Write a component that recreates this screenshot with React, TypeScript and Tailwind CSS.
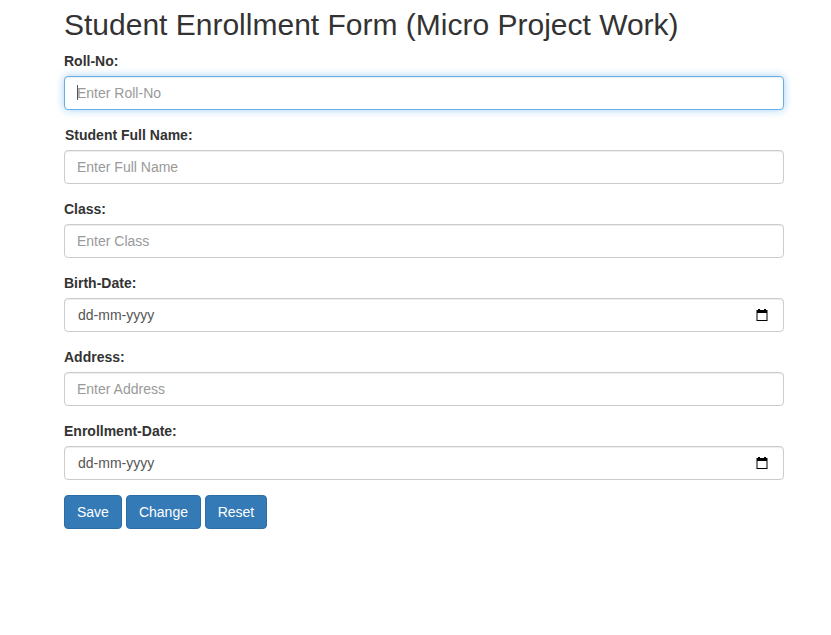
function Cal() {
  return (
    <svg width="14" height="14" viewBox="0 0 14 14" className="shrink-0">
      <path d="M3 1h2v1h4V1h2v1h1.5v11h-11V2H3z M2.5 5v7h9V5z" fill="#000" fillRule="evenodd" />
    </svg>
  );
}

function Field({ label, placeholder, focus, date, labelClass }: { label: string; placeholder: string; focus?: boolean; date?: boolean; labelClass?: string }) {
  const ring = focus
    ? "border-[#66afe9] shadow-[inset_0_1px_1px_rgba(0,0,0,.075),0_0_8px_rgba(102,175,233,.6)]"
    : "border-[#ccc] shadow-[inset_0_1px_1px_rgba(0,0,0,.075)]";
  return (
    <div className="mb-[15px]">
      <label className={`block mb-[5px] h-5 text-sm leading-5 font-bold text-[#333] ${labelClass ?? ""}`}>{label}</label>
      {date ? (
        <div className={`flex h-[34px] items-center justify-between rounded border bg-white pl-[13px] pr-[14px] text-sm text-[#555] ${ring}`}>
          <span>dd-mm-yyyy</span>
          <Cal />
        </div>
      ) : (
        <div className="relative">
          <input
            placeholder={placeholder}
            className={`block h-[34px] w-full rounded border bg-white px-3 text-sm text-[#555] outline-none placeholder:text-[#999] ${ring}`}
          />
          {focus && <span className="absolute left-[13px] top-[9px] h-[15px] w-px bg-[#555]" />}
        </div>
      )}
    </div>
  );
}

export default function App() {
  return (
    <div className="min-h-screen bg-white font-['Liberation_Sans',Arial,sans-serif] text-[#333]">
      <div className="w-[720px] ml-[64px]">
        <h2 className="text-[30px] leading-[33px] font-normal text-[#333] pt-[8px] mb-[10px]">Student Enrollment Form (Micro Project Work)</h2>
        <form>
          <Field label="Roll-No:" placeholder="Enter Roll-No" focus />
          <Field label="Student Full Name:" placeholder="Enter Full Name" labelClass="pl-px" />
          <Field label="Class:" placeholder="Enter Class" />
          <Field label="Birth-Date:" placeholder="" date />
          <Field label="Address:" placeholder="Enter Address" />
          <Field label="Enrollment-Date:" placeholder="" date />
          <div className="flex gap-1">
            <button type="button" className="h-[34px] rounded border border-[#2e6da4] bg-[#337ab7] px-3 text-sm text-white">Save</button>
            <button type="button" className="h-[34px] rounded border border-[#2e6da4] bg-[#337ab7] px-3 text-sm text-white">Change</button>
            <button type="button" className="h-[34px] w-[62px] rounded border border-[#2e6da4] bg-[#337ab7] text-sm text-white">Reset</button>
          </div>
        </form>
      </div>
    </div>
  );
}
